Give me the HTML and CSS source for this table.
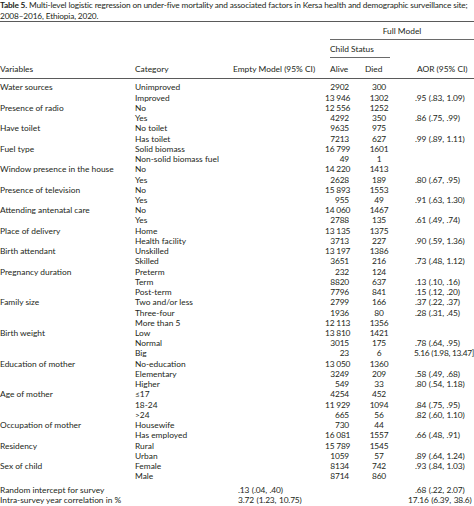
FILE: index.html
```html
<!DOCTYPE html>
<html>
<head>
<meta charset="utf-8">
<link rel="stylesheet" href="styles.css">
</head>
<body>
<div class="page">
<p class="caption"><b>Table 5.</b> Multi-level logistic regression on under-five mortality and associated factors in Kersa health and demographic surveillance site;<br>2008–2016, Ethiopia, 2020.</p>
<table class="tbl">
<colgroup>
<col class="c1"><col class="c2"><col class="c3"><col class="c4"><col class="c5"><col class="c6">
</colgroup>
<thead>
<tr class="h1"><th></th><th></th><th></th><th colspan="3" class="fm"><div class="fm-in">Full Model</div></th></tr>
<tr class="h2"><th></th><th></th><th></th><th colspan="2" class="cs"><div class="cs-in">Child Status</div></th><th></th></tr>
<tr class="h3"><th class="l">Variables</th><th class="l">Category</th><th class="l">Empty Model (95% CI)</th><th class="alive-h">Alive</th><th class="died-h">Died</th><th class="aor-h">AOR (95% CI)</th></tr>
</thead>
<tbody>
<tr class="first"><td>Water sources</td><td>Unimproved</td><td></td><td class="n">2902</td><td class="d">300</td><td class="a"></td></tr>
<tr><td></td><td>Improved</td><td></td><td class="n">13 946</td><td class="d">1302</td><td class="a">.95 (.83, 1.09)</td></tr>
<tr><td>Presence of radio</td><td>No</td><td></td><td class="n">12 556</td><td class="d">1252</td><td class="a"></td></tr>
<tr><td></td><td>Yes</td><td></td><td class="n">4292</td><td class="d">350</td><td class="a">.86 (.75, .99)</td></tr>
<tr><td>Have toilet</td><td>No toilet</td><td></td><td class="n">9635</td><td class="d">975</td><td class="a"></td></tr>
<tr><td></td><td>Has toilet</td><td></td><td class="n">7213</td><td class="d">627</td><td class="a">.99 (.89, 1.11)</td></tr>
<tr><td>Fuel type</td><td>Solid biomass</td><td></td><td class="n">16 799</td><td class="d">1601</td><td class="a"></td></tr>
<tr><td></td><td>Non-solid biomass fuel</td><td></td><td class="n">49</td><td class="d">1</td><td class="a"></td></tr>
<tr><td>Window presence in the house</td><td>No</td><td></td><td class="n">14 220</td><td class="d">1413</td><td class="a"></td></tr>
<tr><td></td><td>Yes</td><td></td><td class="n">2628</td><td class="d">189</td><td class="a">.80 (.67, .95)</td></tr>
<tr><td>Presence of television</td><td>No</td><td></td><td class="n">15 893</td><td class="d">1553</td><td class="a"></td></tr>
<tr><td></td><td>Yes</td><td></td><td class="n">955</td><td class="d">49</td><td class="a">.91 (.63, 1.30)</td></tr>
<tr><td>Attending antenatal care</td><td>No</td><td></td><td class="n">14 060</td><td class="d">1467</td><td class="a"></td></tr>
<tr><td></td><td>Yes</td><td></td><td class="n">2788</td><td class="d">135</td><td class="a">.61 (.49, .74)</td></tr>
<tr><td>Place of delivery</td><td>Home</td><td></td><td class="n">13 135</td><td class="d">1375</td><td class="a"></td></tr>
<tr><td></td><td>Health facility</td><td></td><td class="n">3713</td><td class="d">227</td><td class="a">.90 (.59, 1.36)</td></tr>
<tr><td>Birth attendant</td><td>Unskilled</td><td></td><td class="n">13 197</td><td class="d">1386</td><td class="a"></td></tr>
<tr><td></td><td>Skilled</td><td></td><td class="n">3651</td><td class="d">216</td><td class="a">.73 (.48, 1.12)</td></tr>
<tr><td>Pregnancy duration</td><td>Preterm</td><td></td><td class="n">232</td><td class="d">124</td><td class="a"></td></tr>
<tr><td></td><td>Term</td><td></td><td class="n">8820</td><td class="d">637</td><td class="a">.13 (.10, .16)</td></tr>
<tr><td></td><td>Post-term</td><td></td><td class="n">7796</td><td class="d">841</td><td class="a">.15 (.12, .20)</td></tr>
<tr><td>Family size</td><td>Two and/or less</td><td></td><td class="n">2799</td><td class="d">166</td><td class="a">.37 (.22, .37)</td></tr>
<tr><td></td><td>Three-four</td><td></td><td class="n">1936</td><td class="d">80</td><td class="a">.28 (.31, .45)</td></tr>
<tr><td></td><td>More than 5</td><td></td><td class="n">12 113</td><td class="d">1356</td><td class="a"></td></tr>
<tr><td>Birth weight</td><td>Low</td><td></td><td class="n">13 810</td><td class="d">1421</td><td class="a"></td></tr>
<tr><td></td><td>Normal</td><td></td><td class="n">3015</td><td class="d">175</td><td class="a">.78 (.64, .95)</td></tr>
<tr><td></td><td>Big</td><td></td><td class="n">23</td><td class="d">6</td><td class="a tight">5.16 (1.98, 13.47]</td></tr>
<tr><td>Education of mother</td><td>No-education</td><td></td><td class="n">13 050</td><td class="d">1360</td><td class="a"></td></tr>
<tr><td></td><td>Elementary</td><td></td><td class="n">3249</td><td class="d">209</td><td class="a">.58 (.49, .68)</td></tr>
<tr><td></td><td>Higher</td><td></td><td class="n">549</td><td class="d">33</td><td class="a">.80 (.54, 1.18)</td></tr>
<tr><td>Age of mother</td><td>≤17</td><td></td><td class="n">4254</td><td class="d">452</td><td class="a"></td></tr>
<tr><td></td><td>18-24</td><td></td><td class="n">11 929</td><td class="d">1094</td><td class="a">.84 (.75, .95)</td></tr>
<tr><td></td><td>&gt;24</td><td></td><td class="n">665</td><td class="d">56</td><td class="a">.82 (.60, 1.10)</td></tr>
<tr><td>Occupation of mother</td><td>Housewife</td><td></td><td class="n">730</td><td class="d">44</td><td class="a"></td></tr>
<tr><td></td><td>Has employed</td><td></td><td class="n">16 081</td><td class="d">1557</td><td class="a">.66 (.48, .91)</td></tr>
<tr><td>Residency</td><td>Rural</td><td></td><td class="n">15 789</td><td class="d">1545</td><td class="a"></td></tr>
<tr><td></td><td>Urban</td><td></td><td class="n">1059</td><td class="d">57</td><td class="a">.89 (.64, 1.24)</td></tr>
<tr><td>Sex of child</td><td>Female</td><td></td><td class="n">8134</td><td class="d">742</td><td class="a">.93 (.84, 1.03)</td></tr>
<tr><td></td><td>Male</td><td></td><td class="n">8714</td><td class="d">860</td><td class="a"></td></tr>
<tr class="gap"><td>Random intercept for survey</td><td></td><td class="e">.13 (.04, .40)</td><td class="n"></td><td class="d"></td><td class="a">.68 (.22, 2.07)</td></tr>
<tr><td>Intra-survey year correlation in %</td><td></td><td class="e">3.72 (1.23, 10.75)</td><td class="n"></td><td class="d"></td><td class="a wide">17.16 (6.39, 38.6)</td></tr>
</tbody>
</table>
</div>
</body>
</html>
```
FILE: styles.css
```css
html, body {
  margin: 0;
  padding: 0;
  background: #ffffff;
}
body {
  width: 474px;
  height: 506px;
  overflow: hidden;
  font-family: "Lato", "Liberation Sans", sans-serif;
  color: #231f20;
}
.page {
  width: 474px;
}
.caption {
  margin: 0;
  font-size: 8.3px;
  letter-spacing: -0.15px;
  line-height: 10.5px;
  white-space: nowrap;
  height: 21px;
}
.caption b {
  font-weight: 700;
}
.tbl {
  table-layout: fixed;
  border-collapse: collapse;
  width: 474px;
  font-size: 8.4px;
  white-space: nowrap;
}
.c1 { width: 135px; }
.c2 { width: 98px; }
.c3 { width: 92px; }
.c4 { width: 27px; }
.c5 { width: 54px; }
.c6 { width: 68px; }
th, td {
  padding: 0;
  font-weight: 400;
  overflow: visible;
  vertical-align: middle;
}
thead tr.h1 th {
  border-top: 1.5px solid #5a5a5a;
  height: 17px;
  padding-top: 1px;
}
.fm {
  text-align: left;
  vertical-align: bottom;
}
.fm-in {
  margin-left: 5px;
  text-align: center;
  border-bottom: 1px solid #6a6a6a;
  padding-bottom: 3px;
}
thead tr.h2 th {
  height: 18px;
}
.cs {
  text-align: left;
  vertical-align: bottom;
}
.cs-in {
  margin-left: 5px;
  width: 60px;
  border-bottom: 1px solid #6a6a6a;
  padding-bottom: 3px;
}
thead tr.h3 th {
  height: 19px;
  border-bottom: 1px solid #5a5a5a;
  padding-top: 1px;
}
th.l { text-align: left; }
.alive-h { text-align: left; padding-left: 5px; }
.died-h { text-align: left; padding-left: 13px; }
.aor-h { text-align: left; padding-left: 11px; }
tbody td {
  height: 10.23px;
  line-height: 10.23px;
}
tbody tr.first td {
  padding-top: 3.4px;
}
tbody tr.gap td {
  padding-top: 3.5px;
}
td.n {
  text-align: right;
  padding-right: 3px;
  letter-spacing: -0.2px;
}
td.d {
  text-align: center;
  letter-spacing: -0.2px;
}
td.a {
  padding-left: 9px;
  letter-spacing: -0.15px;
  word-spacing: 0.6px;
}
td.a.tight {
  padding-left: 8px;
  letter-spacing: -0.3px;
  word-spacing: 0;
}
td.a.wide {
  padding-left: 2px;
}
td.e {
  padding-left: 5px;
  letter-spacing: -0.15px;
  word-spacing: 0.6px;
}
```
